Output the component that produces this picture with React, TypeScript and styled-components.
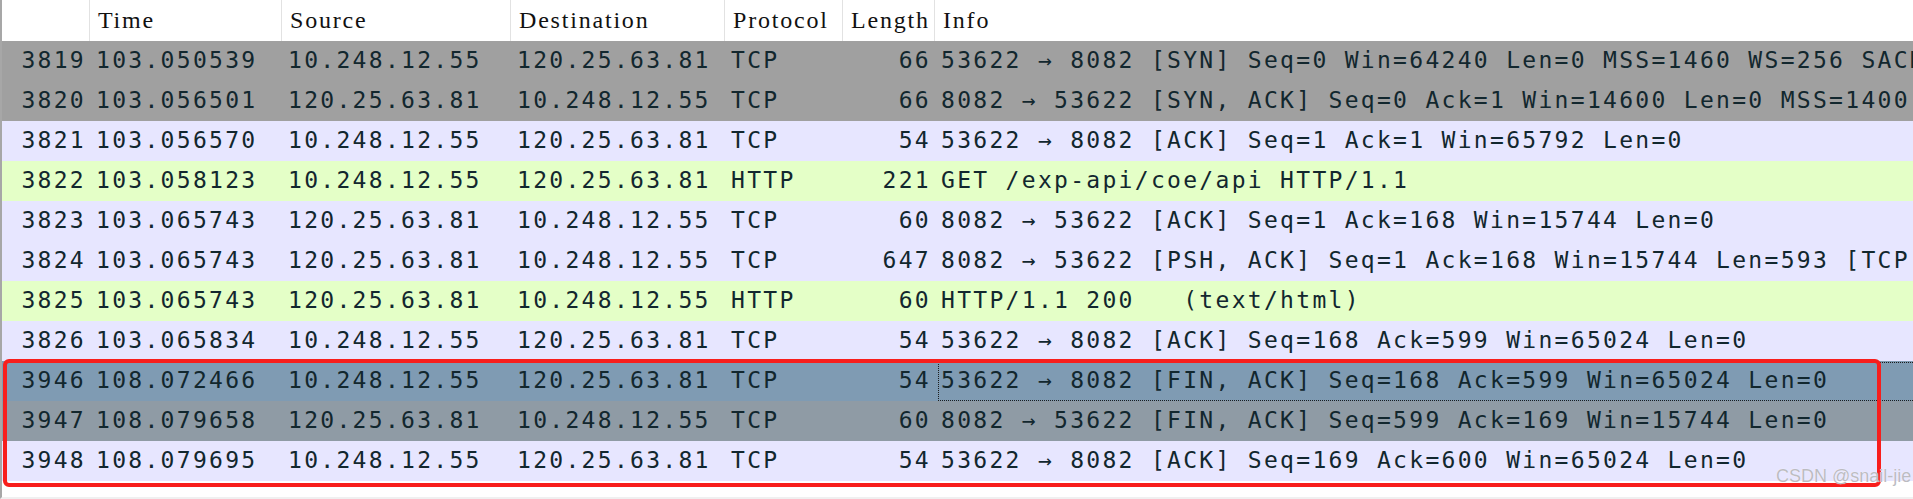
import React from "react";
import styled, { createGlobalStyle } from "styled-components";

const GlobalStyle = createGlobalStyle`
  html, body {
    margin: 0;
    padding: 0;
    background: #ffffff;
  }
  body {
    width: 1913px;
    height: 499px;
    overflow: hidden;
  }
`;

type Tone = "syn" | "tcp" | "http" | "selected" | "fin";

interface Packet {
  no: string;
  time: string;
  source: string;
  destination: string;
  protocol: string;
  length: string;
  info: string;
  tone: Tone;
}

const toneColors: Record<Tone, string> = {
  syn: "#a0a0a0",
  tcp: "#e7e6ff",
  http: "#e4ffc7",
  selected: "#7f9bb3",
  fin: "#8f9ba5",
};

const COLUMNS = "88px 192px 229px 214px 118px 92px 1fr";

const packets: Packet[] = [
  { no: "3819", time: "103.050539", source: "10.248.12.55", destination: "120.25.63.81", protocol: "TCP", length: "66", info: "53622 → 8082 [SYN] Seq=0 Win=64240 Len=0 MSS=1460 WS=256 SACK_PERM=1", tone: "syn" },
  { no: "3820", time: "103.056501", source: "120.25.63.81", destination: "10.248.12.55", protocol: "TCP", length: "66", info: "8082 → 53622 [SYN, ACK] Seq=0 Ack=1 Win=14600 Len=0 MSS=1400 SACK_PERM=1", tone: "syn" },
  { no: "3821", time: "103.056570", source: "10.248.12.55", destination: "120.25.63.81", protocol: "TCP", length: "54", info: "53622 → 8082 [ACK] Seq=1 Ack=1 Win=65792 Len=0", tone: "tcp" },
  { no: "3822", time: "103.058123", source: "10.248.12.55", destination: "120.25.63.81", protocol: "HTTP", length: "221", info: "GET /exp-api/coe/api HTTP/1.1", tone: "http" },
  { no: "3823", time: "103.065743", source: "120.25.63.81", destination: "10.248.12.55", protocol: "TCP", length: "60", info: "8082 → 53622 [ACK] Seq=1 Ack=168 Win=15744 Len=0", tone: "tcp" },
  { no: "3824", time: "103.065743", source: "120.25.63.81", destination: "10.248.12.55", protocol: "TCP", length: "647", info: "8082 → 53622 [PSH, ACK] Seq=1 Ack=168 Win=15744 Len=593 [TCP segment of a reassembled PDU]", tone: "tcp" },
  { no: "3825", time: "103.065743", source: "120.25.63.81", destination: "10.248.12.55", protocol: "HTTP", length: "60", info: "HTTP/1.1 200   (text/html)", tone: "http" },
  { no: "3826", time: "103.065834", source: "10.248.12.55", destination: "120.25.63.81", protocol: "TCP", length: "54", info: "53622 → 8082 [ACK] Seq=168 Ack=599 Win=65024 Len=0", tone: "tcp" },
  { no: "3946", time: "108.072466", source: "10.248.12.55", destination: "120.25.63.81", protocol: "TCP", length: "54", info: "53622 → 8082 [FIN, ACK] Seq=168 Ack=599 Win=65024 Len=0", tone: "selected" },
  { no: "3947", time: "108.079658", source: "120.25.63.81", destination: "10.248.12.55", protocol: "TCP", length: "60", info: "8082 → 53622 [FIN, ACK] Seq=599 Ack=169 Win=15744 Len=0", tone: "fin" },
  { no: "3948", time: "108.079695", source: "10.248.12.55", destination: "120.25.63.81", protocol: "TCP", length: "54", info: "53622 → 8082 [ACK] Seq=169 Ack=600 Win=65024 Len=0", tone: "tcp" },
];

const Screen = styled.div`
  position: relative;
  width: 1913px;
  height: 499px;
  overflow: hidden;
  background: #ffffff;
`;

const PacketList = styled.div`
  display: flex;
  flex-direction: column;
  height: 497px;
  border-left: 2px solid #a7a7a7;
  border-bottom: 2px solid #f0f0f0;
`;

const HeaderRow = styled.div`
  display: grid;
  grid-template-columns: ${COLUMNS};
  height: 41px;
  background: #ffffff;
`;

const HeaderCell = styled.div<{ $last?: boolean }>`
  padding-left: 8px;
  border-right: ${(p) => (p.$last ? "none" : "1px solid #e2e2e2")};
  font-family: "Liberation Serif", "DejaVu Serif", serif;
  font-size: 24px;
  letter-spacing: 1.8px;
  line-height: 41px;
  color: #111111;
  white-space: nowrap;
  overflow: hidden;
`;

const PacketRow = styled.div<{ $tone: Tone }>`
  display: grid;
  grid-template-columns: ${COLUMNS};
  height: 40px;
  background: ${(p) => toneColors[p.$tone]};
  font-family: "DejaVu Sans Mono", "Liberation Mono", monospace;
  font-size: 23px;
  letter-spacing: 2.3px;
  line-height: 39px;
  color: #12272e;
`;

const Cell = styled.div<{ $align?: "left" | "right"; $focused?: boolean }>`
  position: relative;
  padding: ${(p) => (p.$align === "right" ? "0 4px 0 0" : "0 0 0 6px")};
  text-align: ${(p) => p.$align ?? "left"};
  white-space: pre;
  overflow: hidden;

  &::after {
    content: "";
    display: ${(p) => (p.$focused ? "block" : "none")};
    position: absolute;
    top: 1px;
    bottom: 0;
    left: 3px;
    right: 0;
    border: 1px dotted #1c1c1c;
    border-right: none;
  }
`;

const Highlight = styled.div`
  position: absolute;
  left: 3px;
  top: 359px;
  width: 1878px;
  height: 128px;
  box-sizing: border-box;
  border: 4px solid #f81e1c;
  border-radius: 6px;
  pointer-events: none;
`;

const Watermark = styled.div`
  position: absolute;
  left: 1776px;
  top: 467px;
  font-family: "Liberation Sans", Arial, sans-serif;
  font-size: 18px;
  line-height: 18px;
  color: #bcbcc2;
  text-shadow: 0 0 1px #ffffff;
  white-space: nowrap;
`;

const headers = ["", "Time", "Source", "Destination", "Protocol", "Length", "Info"];

export default function App() {
  return (
    <>
      <GlobalStyle />
      <Screen>
        <PacketList>
          <HeaderRow>
            {headers.map((h, i) => (
              <HeaderCell key={i} $last={i === headers.length - 1}>
                {h}
              </HeaderCell>
            ))}
          </HeaderRow>
          {packets.map((p) => (
            <PacketRow key={p.no} $tone={p.tone}>
              <Cell $align="right">{p.no}</Cell>
              <Cell>{p.time}</Cell>
              <Cell>{p.source}</Cell>
              <Cell>{p.destination}</Cell>
              <Cell>{p.protocol}</Cell>
              <Cell $align="right">{p.length}</Cell>
              <Cell $focused={p.tone === "selected"}>{p.info}</Cell>
            </PacketRow>
          ))}
        </PacketList>
        <Highlight />
        <Watermark>CSDN @snail-jie</Watermark>
      </Screen>
    </>
  );
}
